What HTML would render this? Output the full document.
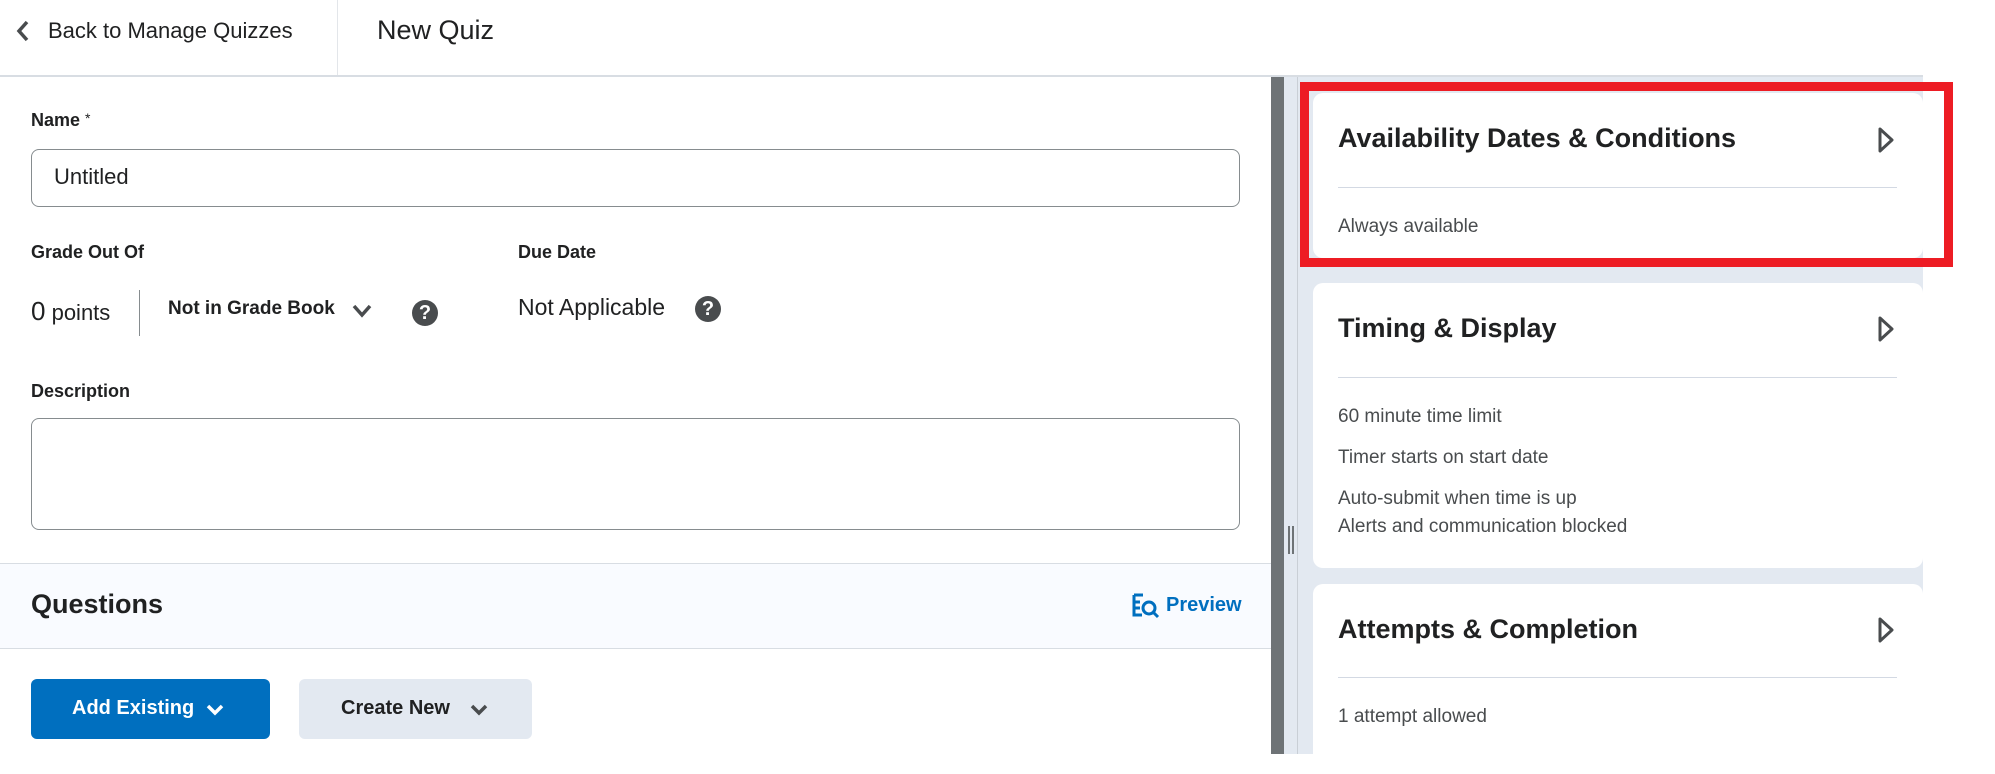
<!DOCTYPE html>
<html><head><style>
*{box-sizing:border-box;margin:0;padding:0}
body{width:1995px;height:754px;overflow:hidden;background:#fff;font-family:"Liberation Sans",sans-serif;color:#202122;position:relative}
.a{position:absolute;white-space:nowrap}
.lbl{font-weight:bold;font-size:18px;color:#202122}
.box{position:absolute;border:1px solid #868c8f;border-radius:8px;background:#fff}
.card{position:absolute;left:1313px;width:610px;background:#fff;border-radius:10px}
.card h2{position:absolute;left:25px;font-size:27px;font-weight:bold;color:#202122}
.card .ln{position:absolute;left:25px;width:559px;height:1px;background:#d3d9e3}
.card p{position:absolute;left:25px;font-size:19px;color:#494c4e;white-space:nowrap}
.tri{position:absolute;left:565px}
.help{position:absolute;width:26px;height:26px;border-radius:50%;background:#494c4e;color:#fff;font-weight:bold;font-size:20px;text-align:center;line-height:26px}
</style></head><body>
<!-- header -->
<svg class="a" style="left:16px;top:20px" width="14" height="22" viewBox="0 0 14 22"><path d="M11 2 L3 11 L11 20" fill="none" stroke="#494c4e" stroke-width="3.5"/></svg>
<div class="a" style="left:48px;top:18px;font-size:22px;color:#202122">Back to Manage Quizzes</div>
<div class="a" style="left:337px;top:0;width:1px;height:76px;background:#e3e6ea"></div>
<div class="a" style="left:377px;top:15px;font-size:27px;color:#202122">New Quiz</div>
<div class="a" style="left:0;top:75px;width:1923px;height:2px;background:#d8dde3"></div>
<!-- left -->
<div class="a lbl" style="left:31px;top:110px">Name <span style="font-weight:normal;font-size:14px;vertical-align:top">*</span></div>
<div class="box" style="left:31px;top:149px;width:1209px;height:58px"></div>
<div class="a" style="left:54px;top:164px;font-size:22px">Untitled</div>
<div class="a lbl" style="left:31px;top:242px">Grade Out Of</div>
<div class="a lbl" style="left:518px;top:242px">Due Date</div>
<div class="a" style="left:31px;top:296px;font-size:22px"><span style="font-size:26px">0</span> points</div>
<div class="a" style="left:139px;top:290px;width:1px;height:46px;background:#868c8f"></div>
<div class="a" style="left:168px;top:298px;font-size:19px;font-weight:bold">Not in Grade Book</div>
<svg class="a" style="left:351px;top:303px" width="22" height="16" viewBox="0 0 22 16"><path d="M3 3 L11 12 L19 3" fill="none" stroke="#494c4e" stroke-width="3.5"/></svg>
<div class="help" style="left:412px;top:300px">?</div>
<div class="a" style="left:518px;top:294px;font-size:23px;color:#202122">Not Applicable</div>
<div class="help" style="left:695px;top:296px">?</div>
<div class="a lbl" style="left:31px;top:381px">Description</div>
<div class="box" style="left:31px;top:418px;width:1209px;height:112px"></div>
<div class="a" style="left:0;top:563px;width:1271px;height:86px;background:#f9fbff;border-top:1px solid #d8dde3;border-bottom:1px solid #d8dde3"></div>
<div class="a" style="left:31px;top:589px;font-size:27px;font-weight:bold">Questions</div>
<svg class="a" style="left:1132px;top:593px" width="28" height="26" viewBox="0 0 28 26"><path d="M2 2h9M2 2v20h8M2 9h6M2 15h6" fill="none" stroke="#006fbf" stroke-width="3"/><circle cx="17" cy="15" r="6" fill="none" stroke="#006fbf" stroke-width="3"/><path d="M21 19l5 5" stroke="#006fbf" stroke-width="3"/></svg>
<div class="a" style="left:1166px;top:594px;font-size:20px;color:#006fbf;font-weight:bold">Preview</div>
<div class="a" style="left:31px;top:679px;width:239px;height:60px;background:#006fbf;border-radius:6px"></div>
<div class="a" style="left:72px;top:697px;font-size:20px;font-weight:bold;color:#fff">Add Existing</div>
<svg class="a" style="left:205px;top:703px" width="20" height="14" viewBox="0 0 20 14"><path d="M3 3 L10 10 L17 3" fill="none" stroke="#fff" stroke-width="3.5"/></svg>
<div class="a" style="left:299px;top:679px;width:233px;height:60px;background:#e3e9f1;border-radius:6px"></div>
<div class="a" style="left:341px;top:697px;font-size:20px;font-weight:bold;color:#202122">Create New</div>
<svg class="a" style="left:469px;top:703px" width="20" height="14" viewBox="0 0 20 14"><path d="M3 3 L10 10 L17 3" fill="none" stroke="#494c4e" stroke-width="3.5"/></svg>
<!-- splitter -->
<div class="a" style="left:1271px;top:77px;width:13px;height:677px;background:#6e7376"></div>
<div class="a" style="left:1284px;top:77px;width:639px;height:677px;background:#e3e9f1"></div>
<div class="a" style="left:1297px;top:77px;width:1px;height:677px;background:#c9cfd6"></div>
<div class="a" style="left:1288px;top:526px;width:2px;height:28px;background:#6e7376"></div>
<div class="a" style="left:1292px;top:526px;width:2px;height:28px;background:#6e7376"></div>
<!-- cards -->
<div class="card" style="top:93px;height:165px">
<h2 style="top:30px">Availability Dates &amp; Conditions</h2>
<svg class="tri" style="top:34px" width="16" height="26" viewBox="0 0 16 26"><path d="M2 2 L14 13 L2 24 Z" fill="none" stroke="#494c4e" stroke-width="3" stroke-linejoin="round"/></svg>
<div class="ln" style="top:94px"></div>
<p style="top:123px">Always available</p>
</div>
<div class="card" style="top:283px;height:285px">
<h2 style="top:30px">Timing &amp; Display</h2>
<svg class="tri" style="top:33px" width="16" height="26" viewBox="0 0 16 26"><path d="M2 2 L14 13 L2 24 Z" fill="none" stroke="#494c4e" stroke-width="3" stroke-linejoin="round"/></svg>
<div class="ln" style="top:94px"></div>
<p style="top:123px">60 minute time limit</p>
<p style="top:164px">Timer starts on start date</p>
<p style="top:205px">Auto-submit when time is up</p>
<p style="top:233px">Alerts and communication blocked</p>
</div>
<div class="card" style="top:584px;height:190px">
<h2 style="top:30px">Attempts &amp; Completion</h2>
<svg class="tri" style="top:33px" width="16" height="26" viewBox="0 0 16 26"><path d="M2 2 L14 13 L2 24 Z" fill="none" stroke="#494c4e" stroke-width="3" stroke-linejoin="round"/></svg>
<div class="ln" style="top:93px"></div>
<p style="top:122px">1 attempt allowed</p>
</div>
<div class="a" style="left:1300px;top:82px;width:653px;height:185px;border:9px solid #ed1c24"></div>
</body></html>
